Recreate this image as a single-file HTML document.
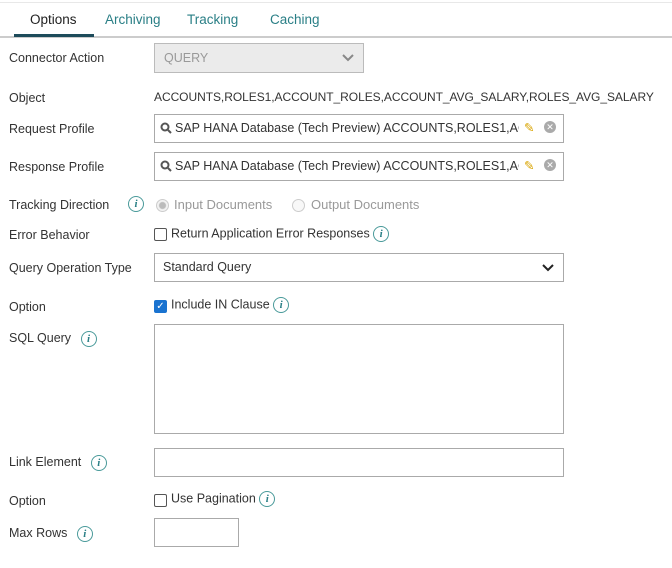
<!DOCTYPE html>
<html><head><style>
body{margin:0;width:672px;height:568px;background:#fff;font-family:"Liberation Sans",sans-serif;font-size:12.5px;color:#333;position:relative;overflow:hidden}
.a{position:absolute;white-space:nowrap}
.l{position:absolute;left:9px;line-height:16px}
.box{position:absolute;border:1px solid #aaa;background:#fff;box-sizing:border-box}
.tab{position:absolute;top:12px;font-size:13.5px;color:#2a7f86}
.i{display:inline-block;width:14px;height:14px;border:1px solid #4a9a9a;border-radius:50%;color:#2a7f86;font:italic bold 11px "Liberation Serif",serif;text-align:center;line-height:14px;vertical-align:middle}
.cb{position:absolute;width:11px;height:11px;border:1px solid #555;border-radius:2px;background:#fff}
.rad{position:absolute;width:11px;height:11px;border:1px solid #ccc;border-radius:50%}
</style></head><body>
<div class="a" style="left:0;top:2px;width:672px;height:1px;background:#e8e8e8"></div>
<div class="tab" style="left:30px;color:#222">Options</div>
<div class="tab" style="left:105px">Archiving</div>
<div class="tab" style="left:187px">Tracking</div>
<div class="tab" style="left:270px">Caching</div>
<div class="a" style="left:0;top:36px;width:672px;height:2px;background:#ccc"></div>
<div class="a" style="left:14px;top:34px;width:80px;height:3px;background:#1d4b5a"></div>

<div class="l" style="top:50px">Connector Action</div>
<div class="box" style="left:154px;top:43px;width:210px;height:30px;background:#ebebeb;border-color:#bbb"><span class="a" style="left:9px;top:7px;color:#999">QUERY</span>
<svg class="a" style="left:187px;top:10px" width="12" height="8"><path d="M1 1l5 5 5-5" stroke="#888" stroke-width="2" fill="none"/></svg></div>

<div class="l" style="top:90px">Object</div>
<div class="a" style="left:154px;top:90px;font-size:12px;letter-spacing:-0.05px">ACCOUNTS,ROLES1,ACCOUNT_ROLES,ACCOUNT_AVG_SALARY,ROLES_AVG_SALARY</div>

<div class="l" style="top:121px">Request Profile</div>
<div class="box" style="left:154px;top:114px;width:410px;height:29px"><svg class="a" style="left:5px;top:7px" width="12" height="12"><circle cx="5" cy="5" r="3.5" stroke="#555" stroke-width="2" fill="none"/><path d="M8 8l3 3" stroke="#555" stroke-width="2"/></svg><span class="a" style="left:20px;top:6px;width:344px;overflow:hidden">SAP HANA Database (Tech Preview) ACCOUNTS,ROLES1,ACCOUNT</span><span class="a" style="left:369px;top:5px;color:#d9a400">✎</span><span class="a" style="left:389px;top:6px;width:12px;height:12px;border-radius:50%;background:#aaa;color:#fff;font-size:9px;text-align:center;line-height:12px">✕</span></div>

<div class="l" style="top:159px">Response Profile</div>
<div class="box" style="left:154px;top:152px;width:410px;height:29px"><svg class="a" style="left:5px;top:7px" width="12" height="12"><circle cx="5" cy="5" r="3.5" stroke="#555" stroke-width="2" fill="none"/><path d="M8 8l3 3" stroke="#555" stroke-width="2"/></svg><span class="a" style="left:20px;top:6px;width:344px;overflow:hidden">SAP HANA Database (Tech Preview) ACCOUNTS,ROLES1,ACCOUNT</span><span class="a" style="left:369px;top:5px;color:#d9a400">✎</span><span class="a" style="left:389px;top:6px;width:12px;height:12px;border-radius:50%;background:#aaa;color:#fff;font-size:9px;text-align:center;line-height:12px">✕</span></div>

<div class="l" style="top:197px">Tracking Direction</div>
<span class="a i" style="left:128px;top:196px">i</span>
<div class="rad" style="left:156px;top:199px;background:radial-gradient(circle,#bbb 3px,#f2f2f2 4px)"></div>
<div class="a" style="left:174px;top:197px;color:#999;font-size:13px">Input Documents</div>
<div class="rad" style="left:292px;top:199px;background:#f8f8f8"></div>
<div class="a" style="left:311px;top:197px;color:#999;font-size:13px">Output Documents</div>

<div class="l" style="top:227px">Error Behavior</div>
<div class="cb" style="left:154px;top:228px"></div>
<div class="a" style="left:171px;top:226px">Return Application Error Responses <span class="i">i</span></div>

<div class="l" style="top:260px">Query Operation Type</div>
<div class="box" style="left:154px;top:253px;width:410px;height:29px"><span class="a" style="left:8px;top:6px">Standard Query</span><svg class="a" style="left:387px;top:10px" width="12" height="8"><path d="M1 1l5 5 5-5" stroke="#222" stroke-width="2" fill="none"/></svg></div>

<div class="l" style="top:299px">Option</div>
<div class="cb" style="left:154px;top:300px;background:#1a73d0;border-color:#1a73d0;color:#fff;font-size:10px;line-height:11px;text-align:center">✓</div>
<div class="a" style="left:171px;top:297px">Include IN Clause <span class="i">i</span></div>

<div class="l" style="top:330px">SQL Query <span class="i" style="margin-left:6px">i</span></div>
<div class="box" style="left:154px;top:324px;width:410px;height:110px"></div>

<div class="l" style="top:454px">Link Element <span class="i" style="margin-left:6px">i</span></div>
<div class="box" style="left:154px;top:448px;width:410px;height:29px"></div>

<div class="l" style="top:493px">Option</div>
<div class="cb" style="left:154px;top:494px"></div>
<div class="a" style="left:171px;top:491px">Use Pagination <span class="i">i</span></div>

<div class="l" style="top:525px">Max Rows <span class="i" style="margin-left:6px">i</span></div>
<div class="box" style="left:154px;top:518px;width:85px;height:29px"></div>
</body></html>
